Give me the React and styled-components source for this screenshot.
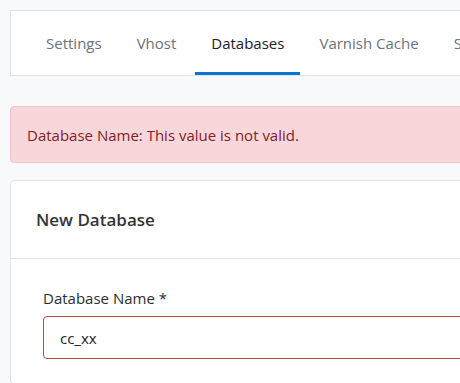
import React from 'react';
import styled, { createGlobalStyle } from 'styled-components';

const GlobalStyle = createGlobalStyle`
  body {
    margin: 0;
    background: #f8f9fa;
    font-family: "Open Sans", "Noto Sans", sans-serif;
    overflow: hidden;
  }
`;

const Page = styled.div`
  width: 700px;
  padding: 10px;
  display: flex;
  flex-direction: column;
`;

const TabBar = styled.nav`
  background: #fff;
  border: 1px solid #e2e3e5;
  display: flex;
  padding: 0 19px;
  height: 66px;
  box-sizing: border-box;
`;

const Tab = styled.a`
  flex-shrink: 0;
  display: flex;
  align-items: center;
  padding: 3px 16px 0;
  margin-right: 3px;
  font-size: 15px;
  color: ${(p) => (p.$active ? '#1d2125' : '#6c7278')};
  border-bottom: 3px solid ${(p) => (p.$active ? '#0b74d1' : 'transparent')};
  white-space: nowrap;
  cursor: pointer;
`;

const Alert = styled.div`
  margin-top: 30px;
  background: #f8d7da;
  border: 1px solid #f5c2c7;
  border-radius: 4px;
  color: #842029;
  font-size: 15px;
  padding: 0 16px;
  height: 57px;
  box-sizing: border-box;
  display: flex;
  align-items: center;
`;

const Card = styled.section`
  margin-top: 17px;
  background: #fff;
  border: 1px solid #e2e3e5;
  border-radius: 4px;
`;

const CardHeader = styled.header`
  height: 77px;
  padding: 0 25px;
  display: flex;
  align-items: center;
  border-bottom: 1px solid #e2e3e5;
  font-size: 17px;
  font-weight: 600;
  color: #32363a;
`;

const CardBody = styled.div`
  padding: 29px 32px 24px;
`;

const Label = styled.label`
  display: block;
  font-size: 15px;
  color: #2a2e33;
  margin-bottom: 8px;
`;

const Input = styled.input`
  box-sizing: border-box;
  display: block;
  width: 100%;
  height: 43px;
  border: 1px solid #b84a4c;
  border-radius: 4px;
  padding: 0 16px;
  font-family: inherit;
  font-size: 15px;
  color: #212529;
  outline: none;
`;

const tabs = ['Settings', 'Vhost', 'Databases', 'Varnish Cache', 'SSL/TLS'];

export default function App() {
  return (
    <>
      <GlobalStyle />
      <Page>
        <TabBar>
          {tabs.map((t) => (
            <Tab key={t} $active={t === 'Databases'}>{t}</Tab>
          ))}
        </TabBar>
        <Alert>Database Name: This value is not valid.</Alert>
        <Card>
          <CardHeader>New Database</CardHeader>
          <CardBody>
            <Label>Database Name *</Label>
            <Input defaultValue="cc_xx" />
          </CardBody>
        </Card>
      </Page>
    </>
  );
}
